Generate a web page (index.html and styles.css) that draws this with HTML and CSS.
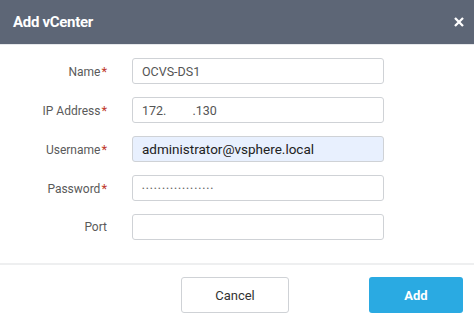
FILE: index.html
```html
<!DOCTYPE html>
<html>
<head>
<meta charset="utf-8">
<link rel="stylesheet" href="styles.css">
</head>
<body>
<div class="dialog">
  <div class="header">
    <span class="title">Add vCenter</span>
    <svg class="close" width="10" height="10" viewBox="0 0 10 10"><path d="M1.8 1.8 L8.2 8.2 M8.2 1.8 L1.8 8.2" stroke="#fff" stroke-width="2.3" stroke-linecap="square"/></svg>
  </div>
  <div class="form">
    <label class="label">Name<span class="req">*</span></label>
    <div class="field">OCVS-DS1</div>
    <label class="label">IP Address<span class="req">*</span></label>
    <div class="field">172.<span class="gap"></span>.130</div>
    <label class="label">Username<span class="req">*</span></label>
    <div class="field autofill">administrator@vsphere.local</div>
    <label class="label">Password<span class="req">*</span></label>
    <div class="field pw">••••••••••••••••••</div>
    <label class="label">Port</label>
    <div class="field"></div>
  </div>
  <div class="footer">
    <button class="btn cancel">Cancel</button>
    <button class="btn add">Add</button>
  </div>
</div>
</body>
</html>
```
FILE: styles.css
```css
html, body {
  margin: 0;
  padding: 0;
  background: #fff;
}
body {
  font-family: Roboto, "Liberation Sans", sans-serif;
}
.dialog {
  width: 474px;
  height: 323px;
  display: flex;
  flex-direction: column;
}
.header {
  height: 44px;
  background: #5d6676;
  display: flex;
  align-items: center;
  justify-content: space-between;
  padding: 0 10px 0 13px;
  border-bottom: 1px solid #e6e8eb;
}
.title {
  color: #fff;
  font-weight: 700;
  font-size: 15px;
  letter-spacing: -0.3px;
}
.close {
  display: block;
}
.form {
  display: grid;
  grid-template-columns: 107px 252px;
  column-gap: 25px;
  row-gap: 13px;
  padding-top: 13px;
  align-items: center;
}
.label {
  text-align: right;
  font-size: 12px;
  color: #5a5a5a;
}
.req {
  color: #c0392b;
  font-size: 13px;
  margin-left: 1px;
}
.field {
  box-sizing: border-box;
  height: 26px;
  border: 1px solid #cfd2d6;
  border-radius: 3px;
  padding: 0 9px;
  display: flex;
  align-items: center;
  font-size: 12.5px;
  color: #555;
}
.gap {
  display: inline-block;
  width: 26px;
}
.autofill {
  background: #e8f0fe;
  color: #222;
  font-size: 13.5px;
}
.pw {
  font-size: 7.5px;
  letter-spacing: 1.5px;
  color: #666;
}
.footer {
  margin-top: 23px;
  border-top: 2px solid #eeeff0;
  display: flex;
  justify-content: flex-end;
  gap: 80px;
  padding: 12px 11px 0 0;
}
.btn {
  height: 36px;
  border-radius: 3px;
  font-family: Roboto, "Liberation Sans", sans-serif;
  font-size: 13px;
  cursor: pointer;
}
.cancel {
  width: 108px;
  background: #fff;
  border: 1px solid #cfd2d6;
  color: #333;
}
.add {
  width: 94px;
  background: #2aaae2;
  border: none;
  color: #fff;
  font-weight: 700;
}
```
